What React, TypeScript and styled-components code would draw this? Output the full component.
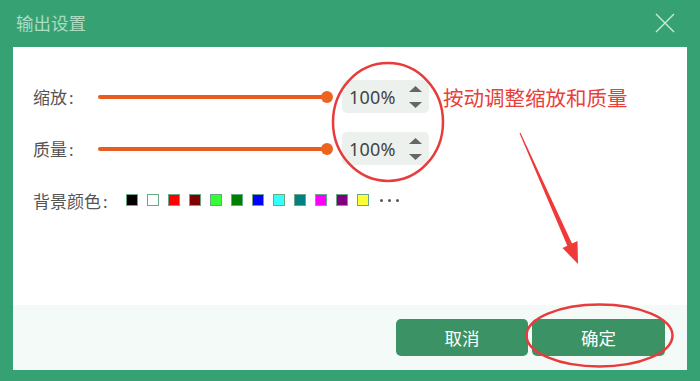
import styled, { createGlobalStyle } from "styled-components";

const GlobalStyle = createGlobalStyle`
  html, body {
    margin: 0;
    padding: 0;
    background: #36a273;
  }
  * {
    box-sizing: border-box;
  }
`;

const font = `"Noto Sans", "Noto Sans CJK SC", sans-serif`;

const Frame = styled.div`
  position: relative;
  width: 700px;
  height: 381px;
  background: #36a273;
  padding: 0 13px 11px 13px;
  display: flex;
  flex-direction: column;
  font-family: ${font};
  overflow: hidden;
`;

const Header = styled.div`
  height: 47px;
  display: flex;
  align-items: center;
  justify-content: space-between;
  padding: 0 12px 2px 3px;
`;

const Title = styled.div`
  font-size: 17.5px;
  color: #abdcc3;
`;

const CloseBtn = styled.div`
  width: 20px;
  height: 20px;
  display: flex;
  align-items: center;
  justify-content: center;
`;

const Panel = styled.div`
  flex: 1;
  background: #ffffff;
  display: flex;
  flex-direction: column;
`;

const Body = styled.div`
  flex: 1;
  padding: 33px 20px 0 20px;
  display: flex;
  flex-direction: column;
`;

const Row = styled.div<{ mt: number; h: number }>`
  display: flex;
  align-items: center;
  height: ${(p) => p.h}px;
  margin-top: ${(p) => p.mt}px;
`;

const Label = styled.div<{ w: number }>`
  width: ${(p) => p.w}px;
  font-size: 17px;
  color: #555555;
  white-space: nowrap;
`;

const Colon = styled.span`
  margin-left: 2px;
`;

const Slider = styled.div`
  position: relative;
  width: 235px;
  height: 12px;
  display: flex;
  align-items: center;
`;

const Track = styled.div`
  flex: 1;
  height: 4px;
  background: #e85d1f;
  border-radius: 2px;
`;

const Knob = styled.div`
  width: 12px;
  height: 12px;
  margin-left: -6px;
  border-radius: 50%;
  background: #ec6420;
`;

const NumberBox = styled.div`
  margin-left: 9px;
  width: 87px;
  height: 33px;
  background: #edf1ee;
  border-radius: 5px;
  display: flex;
  align-items: center;
  justify-content: space-between;
  padding: 0 7px 0 7px;
`;

const NumberText = styled.div`
  font-size: 18px;
  color: #444444;
  letter-spacing: 0.2px;
`;

const Spinner = styled.div`
  display: flex;
  flex-direction: column;
  gap: 10px;
`;

const Swatches = styled.div`
  display: flex;
  align-items: center;
  gap: 9px;
`;

const Swatch = styled.div<{ color: string }>`
  width: 12px;
  height: 12px;
  background: ${(p) => p.color};
  border: 1px solid #6aa888;
`;

const More = styled.div`
  display: flex;
  gap: 5px;
  margin-left: 2px;
`;

const Dot = styled.div`
  width: 3px;
  height: 3px;
  border-radius: 50%;
  background: #555555;
`;

const Footer = styled.div`
  height: 65px;
  background: #f3faf7;
  display: flex;
  align-items: center;
  justify-content: flex-end;
  gap: 4px;
  padding: 0 22px 1px 0;
`;

const Button = styled.div<{ w: number }>`
  width: ${(p) => p.w}px;
  height: 37px;
  background: #3b9265;
  border-radius: 5px;
  color: #ffffff;
  font-size: 17.5px;
  display: flex;
  align-items: center;
  justify-content: center;
`;

const Overlay = styled.svg`
  position: absolute;
  left: 0;
  top: 0;
  pointer-events: none;
`;

const Note = styled.div`
  position: absolute;
  left: 443px;
  top: 84px;
  font-size: 20.5px;
  color: #e8403a;
  white-space: nowrap;
  line-height: 28px;
`;

const colors = [
  "#000000",
  "#ffffff",
  "#ff0000",
  "#800000",
  "#33ff33",
  "#008000",
  "#0000ff",
  "#33ffff",
  "#008080",
  "#ff00ff",
  "#800080",
  "#ffff33",
];

function Spin() {
  return (
    <Spinner>
      <svg width="13" height="6" viewBox="0 0 13 6">
        <polygon points="6.5,0 13,6 0,6" fill="#666" />
      </svg>
      <svg width="13" height="6" viewBox="0 0 13 6">
        <polygon points="0,0 13,0 6.5,6" fill="#666" />
      </svg>
    </Spinner>
  );
}

function SliderRow({ label, mt }: { label: string; mt: number }) {
  return (
    <Row mt={mt} h={33}>
      <Label w={65}>
        {label}
        <Colon>:</Colon>
      </Label>
      <Slider>
        <Track />
        <Knob />
      </Slider>
      <NumberBox>
        <NumberText>100%</NumberText>
        <Spin />
      </NumberBox>
    </Row>
  );
}

export default function App() {
  return (
    <>
      <GlobalStyle />
      <Frame>
        <Header>
          <Title>输出设置</Title>
          <CloseBtn>
            <svg width="20" height="20" viewBox="0 0 20 20">
              <path d="M1 1 L19 19 M19 1 L1 19" stroke="#c6ecd9" strokeWidth="1.4" />
            </svg>
          </CloseBtn>
        </Header>
        <Panel>
          <Body>
            <SliderRow label="缩放" mt={0} />
            <SliderRow label="质量" mt={19} />
            <Row mt={25} h={20}>
              <Label w={93}>
                背景颜色<Colon>:</Colon>
              </Label>
              <Swatches>
                {colors.map((c) => (
                  <Swatch key={c} color={c} />
                ))}
                <More>
                  <Dot />
                  <Dot />
                  <Dot />
                </More>
              </Swatches>
            </Row>
          </Body>
          <Footer>
            <Button w={132}>取消</Button>
            <Button w={133}>确定</Button>
          </Footer>
        </Panel>
        <Overlay width="700" height="381" viewBox="0 0 700 381">
          <ellipse cx="388" cy="122" rx="55" ry="59" fill="none" stroke="#e63c3c" strokeWidth="2.5" />
          <ellipse cx="599.5" cy="335.5" rx="73" ry="31" fill="none" stroke="#e63c3c" strokeWidth="2.5" />
          <polygon
            points="520.5,132.8 572,243.5 577.5,241 578,264 562.5,248 567.3,245.7 519.5,133.2"
            fill="#f03a3a"
          />
        </Overlay>
        <Note>按动调整缩放和质量</Note>
      </Frame>
    </>
  );
}
